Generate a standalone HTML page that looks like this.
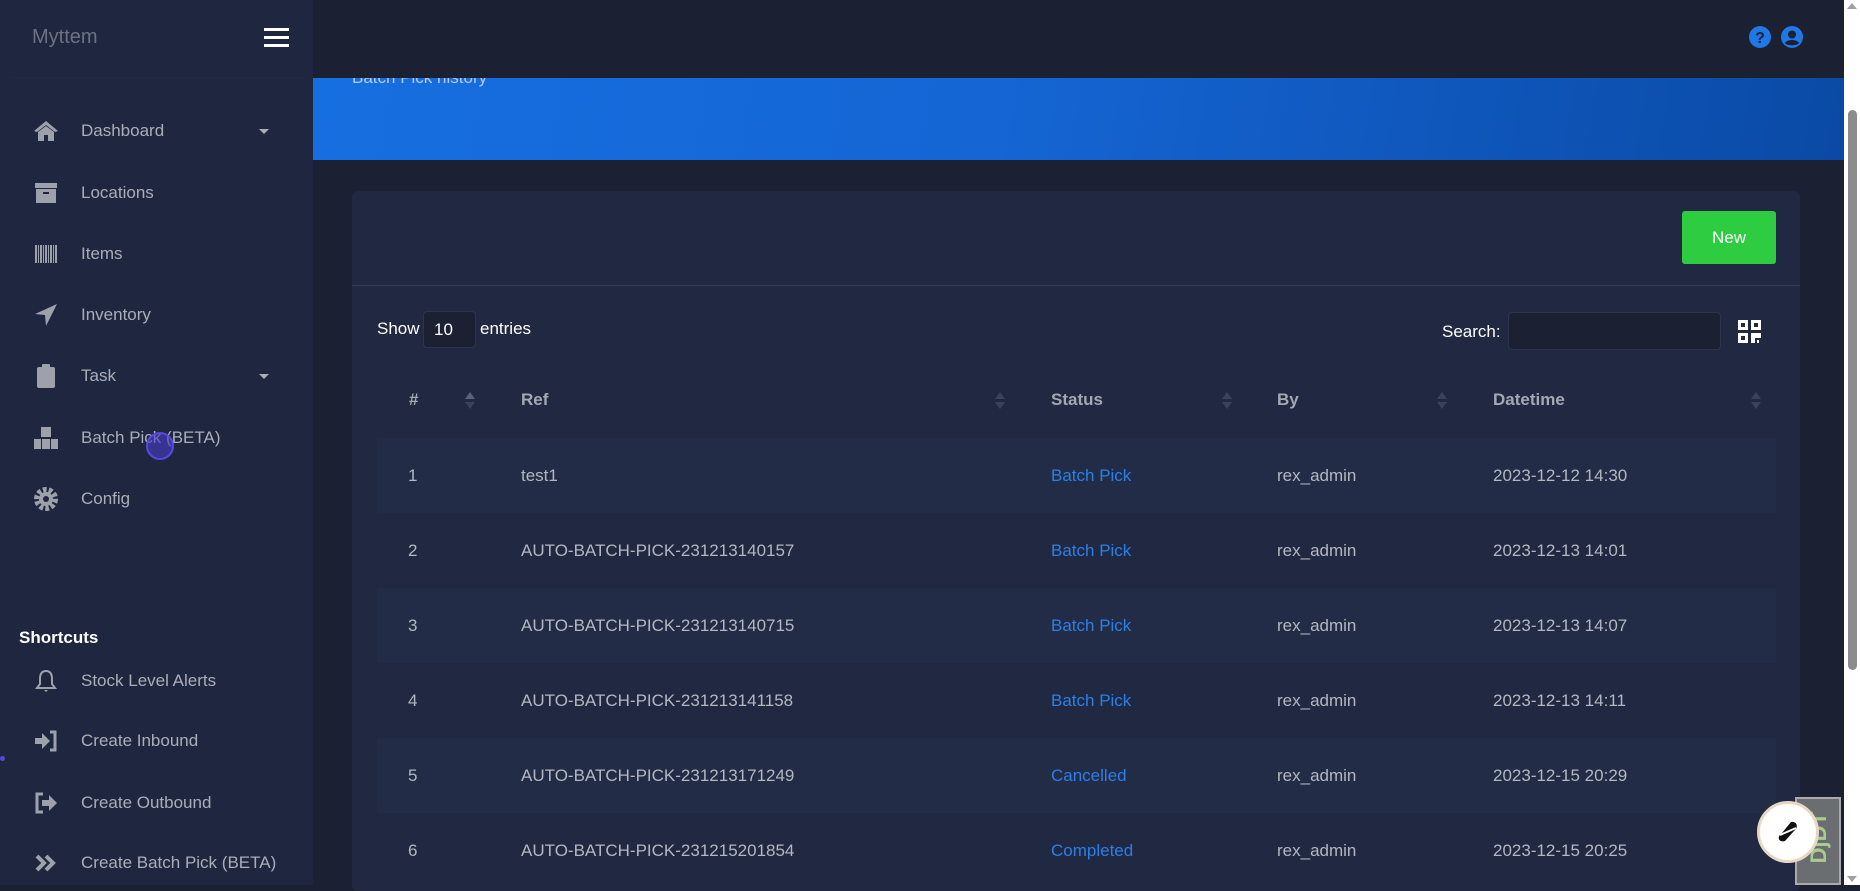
<!DOCTYPE html>
<html><head><meta charset="utf-8"><style>
*{margin:0;padding:0;box-sizing:border-box}
body{width:1860px;height:885px;overflow:hidden;background:#1b2033;font-family:"Liberation Sans",sans-serif;position:relative;color:#b5bac4}
.a{position:absolute}
#side{left:0;top:0;width:313px;height:885px;background:#1f2740}
.nav{position:absolute;left:81px;font-size:17px;color:#a9aeb8;transform:translateY(-50%);white-space:nowrap}
.ic{position:absolute;left:33px;width:26px;height:26px;transform:translateY(-50%)}
.caret{position:absolute;left:259px;width:0;height:0;border-left:5px solid transparent;border-right:5px solid transparent;border-top:5px solid #a9aeb8}
.th{position:absolute;top:400px;transform:translateY(-50%);font-size:17px;font-weight:bold;color:#a3a8b3}
.sa{position:absolute;top:392px;width:0;height:0;border-left:5px solid transparent;border-right:5px solid transparent;border-bottom:7px solid #3a4260}
.sd{position:absolute;top:402px;width:0;height:0;border-left:5px solid transparent;border-right:5px solid transparent;border-top:7px solid #3a4260}
.row{position:absolute;left:377px;width:1399px;height:75px}
.row span{position:absolute;top:50%;transform:translateY(-50%);font-size:17px;color:#b2b7c1;white-space:nowrap}
.row .st{color:#2a7fe8}
</style></head><body>
<div id="side" class="a">
 <div class="a" style="left:32px;top:26px;font-size:20px;color:#6b7282">Myttem</div>
 <div class="a" style="left:264px;top:28px;width:25px;height:3px;background:#fff"></div>
 <div class="a" style="left:264px;top:36px;width:25px;height:3px;background:#fff"></div>
 <div class="a" style="left:264px;top:44px;width:25px;height:3px;background:#fff"></div>
 <div class="a" style="left:12px;top:77px;width:290px;height:1px;background:#232b44"></div>

 <svg class="ic" style="top:131px" viewBox="0 0 26 26"><path d="M13 3 L1 13 L4 14 L13 7 L22 14 L25 13 Z M5 14 L13 8 L21 14 V23 H15 V17 H11 V23 H5 Z" fill="#9ca1ab"/></svg>
 <div class="nav" style="top:131px">Dashboard</div><div class="caret" style="top:129px"></div>
 <svg class="ic" style="top:193px" viewBox="0 0 26 26"><rect x="2" y="3" width="22" height="5" fill="#9ca1ab"/><rect x="3" y="9" width="20" height="14" fill="#9ca1ab"/><rect x="10" y="12" width="6" height="2" fill="#1f2740"/></svg>
 <div class="nav" style="top:193px">Locations</div>
 <svg class="ic" style="top:254px" viewBox="0 0 26 26"><g fill="#9ca1ab"><rect x="2" y="4" width="2" height="18"/><rect x="5" y="4" width="1" height="18"/><rect x="7" y="4" width="2" height="18"/><rect x="10" y="4" width="1" height="18"/><rect x="12" y="4" width="2" height="18"/><rect x="15" y="4" width="1" height="18"/><rect x="17" y="4" width="2" height="18"/><rect x="20" y="4" width="1" height="18"/><rect x="22" y="4" width="2" height="18"/></g></svg>
 <div class="nav" style="top:254px">Items</div>
 <svg class="ic" style="top:315px" viewBox="0 0 26 26"><path d="M24 2 L2 12 L12 13 L13 24 Z" fill="#9ca1ab"/></svg>
 <div class="nav" style="top:315px">Inventory</div>
 <svg class="ic" style="top:376px" viewBox="0 0 26 26"><rect x="4" y="4" width="18" height="21" rx="2" fill="#9ca1ab"/><rect x="9" y="1" width="8" height="5" rx="1" fill="#9ca1ab"/></svg>
 <div class="nav" style="top:376px">Task</div><div class="caret" style="top:374px"></div>
 <svg class="ic" style="top:438px" viewBox="0 0 26 26"><g fill="#9ca1ab"><rect x="8" y="2" width="10" height="10"/><rect x="1" y="14" width="7" height="10"/><rect x="9" y="14" width="8" height="10"/><rect x="18" y="14" width="7" height="10"/></g></svg>
 <div class="nav" style="top:438px">Batch Pick (BETA)</div>
 <div class="a" style="left:146px;top:432px;width:28px;height:28px;border-radius:50%;background:rgba(70,60,200,.6);border:2px solid #5848e0"></div>
 <svg class="ic" style="top:499px" viewBox="0 0 26 26"><circle cx="13" cy="13" r="9" fill="none" stroke="#9ca1ab" stroke-width="6" stroke-dasharray="3.5 2.1"/><circle cx="13" cy="13" r="7" fill="#9ca1ab"/><circle cx="13" cy="13" r="3" fill="#1f2740"/></svg>
 <div class="nav" style="top:499px">Config</div>

 <div class="a" style="left:19px;top:628px;font-size:17px;font-weight:bold;color:#fff">Shortcuts</div>
 <svg class="ic" style="top:681px" viewBox="0 0 26 26"><path d="M13 3 C8 3 7 7 7 11 V16 L4 20 H22 L19 16 V11 C19 7 18 3 13 3 Z" fill="none" stroke="#9ca1ab" stroke-width="2"/><path d="M11 22 H15 L13 24Z" fill="#9ca1ab"/></svg>
 <div class="nav" style="top:681px">Stock Level Alerts</div>
 <svg class="ic" style="top:741px" viewBox="0 0 26 26"><path d="M2 10 H9 V5 L17 13 L9 21 V16 H2 Z" fill="#9ca1ab"/><path d="M17 4 H22 V22 H17" fill="none" stroke="#9ca1ab" stroke-width="3"/></svg>
 <div class="nav" style="top:741px">Create Inbound</div>
 <svg class="ic" style="top:803px" viewBox="0 0 26 26"><path d="M10 4 H4 V22 H10" fill="none" stroke="#9ca1ab" stroke-width="3"/><path d="M9 10 H16 V5 L24 13 L16 21 V16 H9 Z" fill="#9ca1ab"/></svg>
 <div class="nav" style="top:803px">Create Outbound</div>
 <svg class="ic" style="top:863px" viewBox="0 0 26 26"><path d="M4 6 L11 13 L4 20 M13 6 L20 13 L13 20" fill="none" stroke="#9ca1ab" stroke-width="4"/></svg>
 <div class="nav" style="top:863px">Create Batch Pick (BETA)</div>
 <div class="a" style="left:0;top:756px;width:5px;height:5px;border-radius:50%;background:#5848e0"></div>
</div>

<div class="a" style="left:313px;top:78px;width:1531px;height:82px;background:linear-gradient(100deg,#166fe0 0%,#1565d4 45%,#0a4aa5 100%)"></div>
<div class="a" style="left:352px;top:68px;font-size:17px;color:#b5c9ee">Batch Pick history</div>
<div class="a" style="left:313px;top:0;width:1531px;height:78px;background:#1b2033"></div>
<svg class="a" style="left:1749px;top:26px" width="22" height="22" viewBox="0 0 22 22"><circle cx="11" cy="11" r="11" fill="#1e78e6"/><text x="11" y="17" text-anchor="middle" font-family="Liberation Sans" font-weight="bold" font-size="16" fill="#1b2033">?</text></svg>
<svg class="a" style="left:1781px;top:26px" width="22" height="22" viewBox="0 0 22 22"><circle cx="11" cy="11" r="11" fill="#1e78e6"/><circle cx="11" cy="8.5" r="4" fill="#1b2033"/><path d="M4 17 C6 13 16 13 18 17 C16 20 6 20 4 17Z" fill="#1b2033"/></svg>

<div class="a" style="left:352px;top:191px;width:1448px;height:700px;background:#212942;border-radius:6px"></div>
<div class="a" style="left:1682px;top:211px;width:94px;height:53px;background:#2ecc40;border-radius:3px;color:#fff;font-size:17px;text-align:center;line-height:53px">New</div>
<div class="a" style="left:352px;top:285px;width:1448px;height:1px;background:#343c55"></div>

<div class="a" style="left:377px;top:319px;font-size:17px;color:#fff">Show</div>
<div class="a" style="left:423px;top:311px;width:53px;height:37px;background:#1b2033;border:1px solid #2d354e;border-radius:4px;color:#fff;font-size:17px;padding:8px 0 0 10px">10</div>
<div class="a" style="left:480px;top:319px;font-size:17px;color:#fff">entries</div>
<div class="a" style="left:1442px;top:322px;font-size:17px;color:#fff">Search:</div>
<div class="a" style="left:1508px;top:312px;width:213px;height:38px;background:#1b2033;border:1px solid #2d354e;border-radius:4px"></div>
<svg class="a" style="left:1738px;top:320px" width="23" height="24" viewBox="0 0 23 24"><g fill="#fff"><rect x="0" y="0" width="10" height="10"/><rect x="13" y="0" width="10" height="10"/><rect x="0" y="13" width="10" height="10"/><rect x="13" y="13" width="4" height="10"/><rect x="17" y="13" width="6" height="5"/><rect x="19" y="20" width="2" height="3"/></g><g fill="#212942"><rect x="3" y="3" width="4" height="4"/><rect x="16" y="3" width="4" height="4"/><rect x="3" y="16" width="4" height="4"/></g></svg>

<div class="th" style="left:409px">#</div><div class="sa" style="left:465px;border-bottom-color:#5a6178"></div><div class="sd" style="left:465px"></div>
<div class="th" style="left:521px">Ref</div><div class="sa" style="left:995px"></div><div class="sd" style="left:995px"></div>
<div class="th" style="left:1051px">Status</div><div class="sa" style="left:1222px"></div><div class="sd" style="left:1222px"></div>
<div class="th" style="left:1277px">By</div><div class="sa" style="left:1437px"></div><div class="sd" style="left:1437px"></div>
<div class="th" style="left:1493px">Datetime</div><div class="sa" style="left:1751px"></div><div class="sd" style="left:1751px"></div>

<div class="row" style="top:438px;background:#232c46"><span style="left:31px">1</span><span style="left:144px">test1</span><span class="st" style="left:674px">Batch Pick</span><span style="left:900px">rex_admin</span><span style="left:1116px">2023-12-12 14:30</span></div>
<div class="row" style="top:513px"><span style="left:31px">2</span><span style="left:144px">AUTO-BATCH-PICK-231213140157</span><span class="st" style="left:674px">Batch Pick</span><span style="left:900px">rex_admin</span><span style="left:1116px">2023-12-13 14:01</span></div>
<div class="row" style="top:588px;background:#232c46"><span style="left:31px">3</span><span style="left:144px">AUTO-BATCH-PICK-231213140715</span><span class="st" style="left:674px">Batch Pick</span><span style="left:900px">rex_admin</span><span style="left:1116px">2023-12-13 14:07</span></div>
<div class="row" style="top:663px"><span style="left:31px">4</span><span style="left:144px">AUTO-BATCH-PICK-231213141158</span><span class="st" style="left:674px">Batch Pick</span><span style="left:900px">rex_admin</span><span style="left:1116px">2023-12-13 14:11</span></div>
<div class="row" style="top:738px;background:#232c46"><span style="left:31px">5</span><span style="left:144px">AUTO-BATCH-PICK-231213171249</span><span class="st" style="left:674px">Cancelled</span><span style="left:900px">rex_admin</span><span style="left:1116px">2023-12-15 20:29</span></div>
<div class="row" style="top:813px"><span style="left:31px">6</span><span style="left:144px">AUTO-BATCH-PICK-231215201854</span><span class="st" style="left:674px">Completed</span><span style="left:900px">rex_admin</span><span style="left:1116px">2023-12-15 20:25</span></div>

<div class="a" style="left:1795px;top:797px;width:46px;height:88px;background:#6b6e70;border:2px solid #aaa"></div>
<div class="a" style="left:1806px;top:812px;writing-mode:vertical-rl;transform:rotate(180deg);font-size:22px;font-weight:bold;color:#a8cc8c">DjDT</div>
<div class="a" style="left:1757px;top:801px;width:62px;height:62px;border-radius:50%;background:#fff;border:3px solid #e6d8c4"></div>
<svg class="a" style="left:1774px;top:818px" width="28" height="28" viewBox="0 0 28 28"><path d="M17 4 C23 3 25 9 20 13 L11 23 C5 25 2 19 8 15 Z" fill="#111"/><path d="M6 17 L22 10" stroke="#fff" stroke-width="2"/></svg>

<div class="a" style="left:1844px;top:0;width:16px;height:885px;background:#fff"></div>
<div class="a" style="left:1847px;top:3px;border-left:5px solid transparent;border-right:5px solid transparent;border-bottom:6px solid #a0a0a0"></div>
<div class="a" style="left:1848px;top:110px;width:9px;height:560px;background:#8c8c8c;border-radius:5px"></div>
<div class="a" style="left:1847px;top:876px;border-left:5px solid transparent;border-right:5px solid transparent;border-top:6px solid #a0a0a0"></div>
</body></html>
